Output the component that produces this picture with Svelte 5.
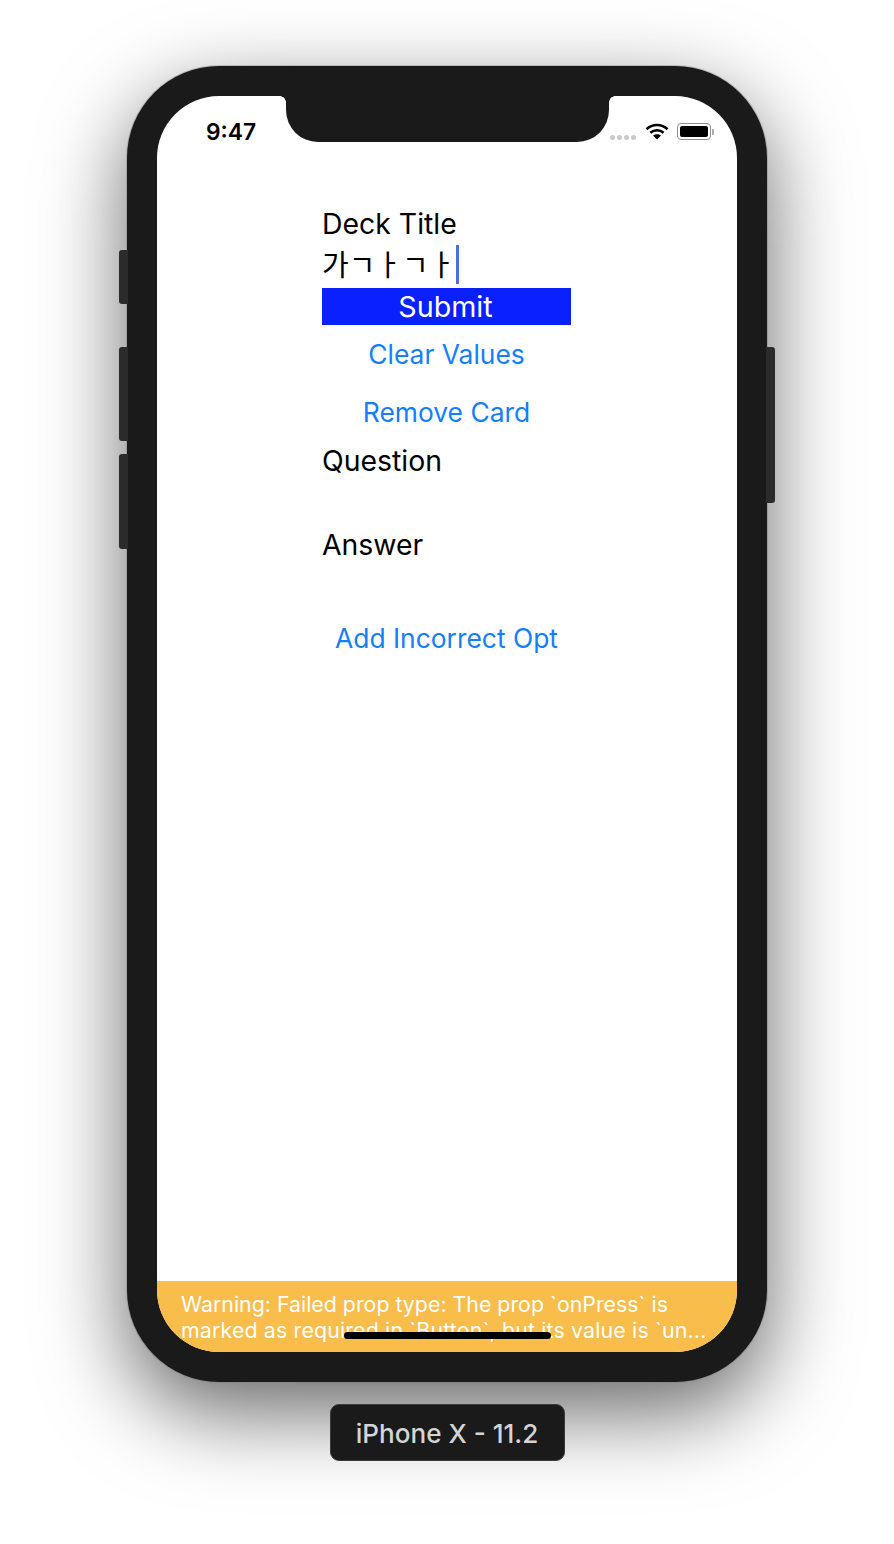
<script>
  const links = {
    clear: 'Clear Values',
    remove: 'Remove Card',
    add: 'Add Incorrect Opt'
  };
</script>

<main class="page">
  <div class="device">
    <span class="side mute"></span>
    <span class="side vol-up"></span>
    <span class="side vol-down"></span>
    <span class="side power"></span>

    <div class="screen">
      <div class="notch"></div>

      <header class="status">
        <span class="time">9:47</span>
        <div class="status-icons">
          <span class="signal"><i></i><i></i><i></i><i></i></span>
          <svg class="wifi" width="24" height="17" viewBox="0 0 24 17" aria-hidden="true">
            <path d="M1.5 6.2C7.4 .6 16.6 .6 22.5 6.2" fill="none" stroke="#000" stroke-width="2.6" />
            <path d="M5.4 9.8C9.2 6.4 14.8 6.4 18.6 9.8" fill="none" stroke="#000" stroke-width="2.6" />
            <path d="M12 16.6L8 12.6C10.3 10.8 13.7 10.8 16 12.6Z" fill="#000" />
          </svg>
          <span class="battery"><b></b></span>
          <span class="nub"></span>
        </div>
      </header>

      <section class="form">
        <div class="label first">Deck Title</div>
        <div class="input">
          <span class="typed" lang="ko">가ㄱㅏㄱㅏ</span><span class="caret"></span>
        </div>
        <button type="button" class="submit">Submit</button>
        <button type="button" class="link clear">{links.clear}</button>
        <button type="button" class="link remove">{links.remove}</button>
        <div class="label question">Question</div>
        <div class="label answer">Answer</div>
        <button type="button" class="link add">{links.add}</button>
      </section>

      <footer class="warning">
        <div>Warning: Failed prop type: The prop `onPress` is</div>
        <div class="second">marked as required in `Button`, but its value is `un...</div>
      </footer>
      <span class="home"></span>
    </div>
  </div>

  <div class="device-name">iPhone X - 11.2</div>
</main>

<style>
  :global(body) {
    margin: 0;
    background: #fff;
  }
  .page {
    width: 894px;
    height: 1544px;
    padding-top: 66px;
    box-sizing: border-box;
    overflow: hidden;
    display: flex;
    flex-direction: column;
    align-items: center;
    font-family: Inter, "Liberation Sans", sans-serif;
  }

  .device {
    position: relative;
    width: 640px;
    height: 1316px;
    padding: 30px;
    box-sizing: border-box;
    background: #1a1a1a;
    border-radius: 92px;
    box-shadow: 0 0 0 1px rgba(120, 120, 120, 0.35), 0 30px 85px rgba(0, 0, 0, 0.6);
  }
  .side {
    position: absolute;
    width: 9px;
    background: #2b2b2b;
  }
  .mute { left: -8px; top: 184px; height: 54px; border-radius: 3px 0 0 3px; }
  .vol-up { left: -8px; top: 281px; height: 94px; border-radius: 3px 0 0 3px; }
  .vol-down { left: -8px; top: 388px; height: 95px; border-radius: 3px 0 0 3px; }
  .power { right: -8px; top: 281px; height: 156px; border-radius: 0 3px 3px 0; }

  .screen {
    position: relative;
    height: 100%;
    display: flex;
    flex-direction: column;
    background: #fff;
    border-radius: 62px;
    overflow: hidden;
  }
  .notch {
    position: absolute;
    left: 129px;
    top: -2px;
    width: 323px;
    height: 48px;
    background: #1a1a1a;
    border-radius: 0 0 32px 32px;
  }
  .notch::before,
  .notch::after {
    content: '';
    position: absolute;
    top: 2px;
    width: 6px;
    height: 6px;
  }
  .notch::before {
    left: -6px;
    background: radial-gradient(circle at 0 100%, #fff 5.5px, #1a1a1a 6px);
  }
  .notch::after {
    right: -6px;
    background: radial-gradient(circle at 100% 100%, #fff 5.5px, #1a1a1a 6px);
  }

  .status {
    flex-shrink: 0;
    height: 24px;
    padding: 24px 0 0 49px;
    display: flex;
    justify-content: space-between;
    align-items: flex-start;
    position: relative;
  }
  .time {
    font-size: 22.8px;
    font-weight: 600;
    line-height: 24px;
    color: #000;
  }
  .status-icons {
    display: flex;
    align-items: center;
    padding-top: 3px;
    margin-right: 23px;
  }
  .signal {
    display: flex;
    gap: 2px;
    margin: 12px 9px 0 0;
  }
  .signal i {
    width: 5px;
    height: 5px;
    border-radius: 50%;
    background: #c9c9c9;
  }
  .wifi { margin-right: 8px; }
  .battery {
    width: 34px;
    height: 17px;
    box-sizing: border-box;
    padding: 2px;
    border: 1px solid #8f8f8f;
    border-radius: 4px;
    display: flex;
  }
  .battery b {
    flex: 1;
    background: #000;
    border-radius: 2px;
  }
  .nub {
    width: 2px;
    height: 6px;
    margin-left: 1px;
    background: #aaa;
    border-radius: 0 1px 1px 0;
  }

  .form {
    width: 249px;
    align-self: center;
    display: flex;
    flex-direction: column;
    padding-top: 63px;
    margin-right: 1px;
    color: #000;
  }
  .label {
    font-size: 28.4px;
    line-height: 34px;
  }
  .input {
    height: 39px;
    margin-top: 4px;
    display: flex;
    align-items: center;
    font-family: "Noto Sans CJK KR", sans-serif;
    font-size: 29px;
    line-height: 39px;
  }
  .typed { margin-top: -2px; }
  .caret {
    width: 3px;
    height: 39px;
    background: #4a6fe0;
    margin-left: 1px;
  }
  .submit {
    height: 37px;
    margin-top: 4px;
    padding: 0 2px 0 0;
    border: 0;
    background: #0a20ff;
    color: #fff;
    font: inherit;
    font-size: 28.7px;
    line-height: 37px;
  }
  .link {
    padding: 0;
    border: 0;
    background: none;
    color: #147efb;
    font: inherit;
    font-size: 26.4px;
    line-height: 34px;
    text-align: center;
  }
  .clear { margin-top: 12px; }
  .remove { margin-top: 24px; }
  .question { margin-top: 15px; }
  .answer { margin-top: 50px; }
  .add { margin-top: 59px; }

  .warning {
    margin-top: auto;
    height: 71px;
    box-sizing: border-box;
    padding: 10px 0 0 24px;
    background: #f8bd4b;
    color: #fff;
    font-size: 21.35px;
    line-height: 26px;
    white-space: nowrap;
  }
  .second { letter-spacing: 0.15px; }
  .home {
    position: absolute;
    left: 187px;
    bottom: 13px;
    width: 207px;
    height: 7px;
    border-radius: 4px;
    background: #000;
  }

  .device-name {
    margin-top: 22px;
    width: 235px;
    height: 57px;
    box-sizing: border-box;
    display: flex;
    align-items: center;
    justify-content: center;
    padding-top: 2px;
    background: #1a1a1a;
    border: 1px solid #3a3a3a;
    border-radius: 9px;
    color: #d4d4d4;
    font-size: 26.1px;
    font-weight: 500;
    position: relative;
  }
</style>
